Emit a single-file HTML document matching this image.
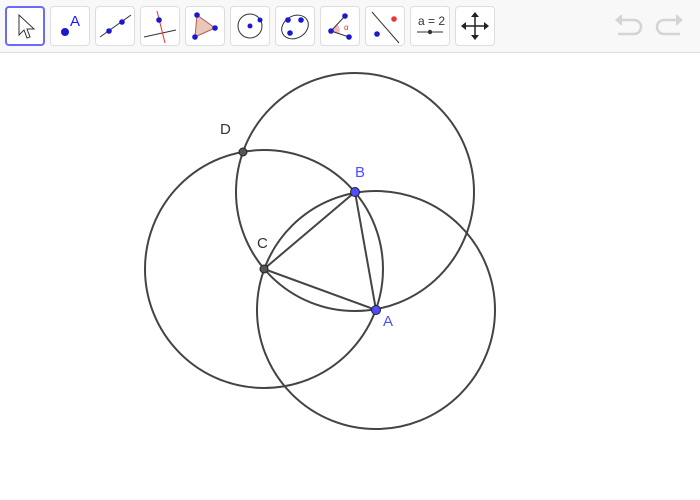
<!DOCTYPE html>
<html><head><style>
body{margin:0;width:700px;height:500px;background:#fff;overflow:hidden;font-family:"Liberation Sans",sans-serif;position:relative}
.tb{position:absolute;left:0;top:0;width:700px;height:52px;background:#f8f8f8;border-bottom:1px solid #ddd}
.b{position:absolute;top:6px;width:38px;height:38px;border:1px solid #ddd;border-radius:4px;background:#fff}
.b svg{position:absolute;left:0;top:0}
</style></head><body>
<div class="tb">
<div class="b" style="left:5px;border:2px solid #6a6cf6;width:36px;height:36px;top:6px"><svg width="36" height="36"><path d="M12 7 L12 27 L17 22 L20 30 L23 29 L20 21 L27 21 Z" fill="#fff" stroke="#333" stroke-width="1"/></svg></div>
<div class="b" style="left:50px"><svg width="38" height="38"><circle cx="14" cy="25" r="4" fill="#1a1acc"/><text x="19" y="19" font-size="15" fill="#1a1aff" font-family="Liberation Sans">A</text></svg></div>
<div class="b" style="left:95px"><svg width="38" height="38"><line x1="4" y1="30" x2="35" y2="8" stroke="#333"/><circle cx="13" cy="24" r="2.8" fill="#1a1acc"/><circle cx="26" cy="15" r="2.8" fill="#1a1acc"/></svg></div>
<div class="b" style="left:140px"><svg width="38" height="38"><line x1="3" y1="30" x2="35" y2="23" stroke="#333"/><line x1="16" y1="4" x2="24" y2="36" stroke="#e33"/><circle cx="18" cy="13" r="2.8" fill="#1a1acc"/></svg></div>
<div class="b" style="left:185px"><svg width="38" height="38"><polygon points="11,8 29,21 9,30" fill="#e8c8b8" stroke="#b55" /><circle cx="11" cy="8" r="2.8" fill="#1a1acc"/><circle cx="29" cy="21" r="2.8" fill="#1a1acc"/><circle cx="9" cy="30" r="2.8" fill="#1a1acc"/></svg></div>
<div class="b" style="left:230px"><svg width="38" height="38"><circle cx="19" cy="19" r="12" fill="none" stroke="#333"/><circle cx="19" cy="19" r="2.5" fill="#1a1acc"/><circle cx="29" cy="13" r="2.5" fill="#1a1acc"/></svg></div>
<div class="b" style="left:275px"><svg width="38" height="38"><ellipse cx="19" cy="20" rx="14" ry="11" transform="rotate(-30 19 20)" fill="none" stroke="#333"/><circle cx="12" cy="13" r="2.8" fill="#1a1acc"/><circle cx="25" cy="13" r="2.8" fill="#1a1acc"/><circle cx="14" cy="26" r="2.8" fill="#1a1acc"/></svg></div>
<div class="b" style="left:320px"><svg width="38" height="38"><path d="M10 24 L16 17 A9 9 0 0 1 18 27 Z" fill="#f4b8b8"/><line x1="10" y1="24" x2="24" y2="9" stroke="#333"/><line x1="10" y1="24" x2="28" y2="30" stroke="#333"/><circle cx="10" cy="24" r="2.8" fill="#1a1acc"/><circle cx="24" cy="9" r="2.8" fill="#1a1acc"/><circle cx="28" cy="30" r="2.8" fill="#1a1acc"/><text x="23" y="23" font-size="8" fill="#e33">α</text></svg></div>
<div class="b" style="left:365px"><svg width="38" height="38"><line x1="6" y1="5" x2="33" y2="36" stroke="#333"/><circle cx="28" cy="12" r="2.8" fill="#e33"/><circle cx="11" cy="27" r="2.8" fill="#1a1acc"/></svg></div>
<div class="b" style="left:410px"><svg width="38" height="38"><text x="7" y="18" font-size="12" fill="#333" font-family="Liberation Sans">a = 2</text><line x1="6" y1="25" x2="32" y2="25" stroke="#333"/><circle cx="19" cy="25" r="2.2" fill="#333"/></svg></div>
<div class="b" style="left:455px"><svg width="38" height="38"><path d="M19 8 V30 M8 19 H30" stroke="#222" stroke-width="1.5"/><polygon points="19,5 15,10 23,10" fill="#222"/><polygon points="19,33 15,28 23,28" fill="#222"/><polygon points="5,19 10,15 10,23" fill="#222"/><polygon points="33,19 28,15 28,23" fill="#222"/></svg></div>
<svg style="position:absolute;left:610px;top:10px" width="80" height="32"><path d="M10 10 H24 A7 7 0 0 1 24 24 H8" fill="none" stroke="#d4d4d4" stroke-width="2.5"/><polygon points="5,10 12,4 12,16" fill="#d4d4d4"/><path d="M68 10 H54 A7 7 0 0 0 54 24 H70" fill="none" stroke="#d4d4d4" stroke-width="2.5"/><polygon points="73,10 66,4 66,16" fill="#d4d4d4"/></svg>
</div>
<svg style="position:absolute;left:0;top:0" width="700" height="500">
<g fill="none" stroke="#444" stroke-width="2">
<circle cx="355" cy="192" r="119"/>
<circle cx="376" cy="310" r="119"/>
<circle cx="264" cy="269" r="119"/>
<polygon points="355,192 376,310 264,269"/>
</g>
<circle cx="243" cy="152" r="4" fill="#555" stroke="#222"/>
<circle cx="264" cy="269" r="4" fill="#555" stroke="#222"/>
<circle cx="355" cy="192" r="4.5" fill="#4d4dff" stroke="#222"/>
<circle cx="376" cy="310" r="4.5" fill="#4d4dff" stroke="#222"/>
<g font-family="Liberation Sans" font-size="15">
<text x="220" y="134" fill="#333">D</text>
<text x="257" y="248" fill="#333">C</text>
<text x="355" y="177" fill="#4d4dff">B</text>
<text x="383" y="326" fill="#4d4dff">A</text>
</g>
</svg>
</body></html>
